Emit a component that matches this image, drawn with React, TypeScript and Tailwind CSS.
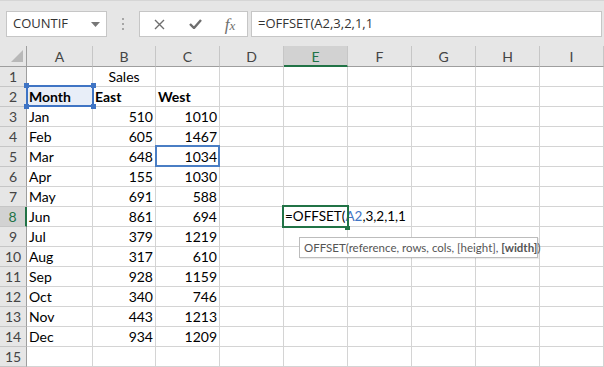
import React from "react";

const cols = ["A", "B", "C", "D", "E", "F", "G", "H", "I"];

const data: [string, number, number][] = [
  ["Jan", 510, 1010],
  ["Feb", 605, 1467],
  ["Mar", 648, 1034],
  ["Apr", 155, 1030],
  ["May", 691, 588],
  ["Jun", 861, 694],
  ["Jul", 379, 1219],
  ["Aug", 317, 610],
  ["Sep", 928, 1159],
  ["Oct", 340, 746],
  ["Nov", 443, 1213],
  ["Dec", 934, 1209],
];

function cellContent(row: number, col: number) {
  if (row === 1 && col === 1) return { text: "Sales", align: "center", bold: false };
  if (row === 2 && col === 0) return { text: "Month", align: "left", bold: true };
  if (row === 2 && col === 1) return { text: "East", align: "left", bold: true };
  if (row === 2 && col === 2) return { text: "West", align: "left", bold: true };
  const d = data[row - 3];
  if (d && col < 3) {
    if (col === 0) return { text: d[0], align: "left", bold: false };
    return { text: String(d[col]), align: "right", bold: false };
  }
  return null;
}

function FormulaBar() {
  return (
    <div className="flex h-[46px] items-start border-t border-[#d6d6d6] bg-[#e6e6e6] pl-[6px] pr-[2px] pt-[10px] font-['Open_Sans',sans-serif]">
      <div className="flex h-[26px] w-[101px] items-center justify-between border border-[#c6c6c6] bg-white pl-[6px] pr-[6px] text-[13px] text-[#333]">
        <span>COUNTIF</span>
        <svg width="9" height="5" viewBox="0 0 9 5">
          <path d="M0 0h9L4.5 5z" fill="#777" />
        </svg>
      </div>
      <div className="flex w-[32px] flex-col items-center gap-[3px] pt-[7px]">
        <span className="h-[2px] w-[2px] bg-[#a6a6a6]" />
        <span className="h-[2px] w-[2px] bg-[#a6a6a6]" />
        <span className="h-[2px] w-[2px] bg-[#a6a6a6]" />
      </div>
      <div className="flex h-[26px] w-[109px] items-center border border-[#c6c6c6] bg-white">
        <div className="flex w-[37px] justify-center pl-[2px]">
          <svg width="11" height="11" viewBox="0 0 11 11">
            <path d="M1 1l9 9M10 1l-9 9" stroke="#6e6e6e" strokeWidth="1.4" />
          </svg>
        </div>
        <div className="flex w-[36px] justify-center">
          <svg width="13" height="10" viewBox="0 0 13 10">
            <path d="M1 5l4 4 7-8" stroke="#6e6e6e" strokeWidth="2.4" fill="none" />
          </svg>
        </div>
        <div className="flex w-[34px] items-baseline justify-center font-['Liberation_Serif',serif] text-[17px] leading-none italic text-[#6e6e6e]">
          f<span className="text-[13px]">x</span>
        </div>
      </div>
      <div className="ml-[3px] flex h-[26px] flex-1 items-center border border-[#c6c6c6] bg-white pl-[6px] text-[13px] text-[#333]">
        =OFFSET(A2,3,2,1,1
      </div>
    </div>
  );
}

export default function App() {
  const rows = Array.from({ length: 15 }, (_, i) => i + 1);
  return (
    <div className="relative h-[367px] w-[604px] overflow-hidden bg-white font-['Lato',sans-serif] text-[14px] text-black">
      <FormulaBar />
      <div className="relative grid grid-cols-[27px_66px_63px_64px_64px_64px_64px_64px_64px_64px]">
        {/* column headers */}
        <div className="relative h-[21px] border-r border-b border-[#9e9e9e] bg-[#e6e6e6]">
          <svg className="absolute left-[11px] top-[4px]" width="12" height="12" viewBox="0 0 12 12">
            <path d="M12 0V12H0z" fill="#b8b8b8" />
          </svg>
        </div>
        {cols.map((c) => (
          <div
            key={c}
            className={
              c === "E"
                ? "flex h-[21px] items-center justify-center border-r border-b-2 border-r-[#c6c6c6] border-b-[#217346] bg-[#d2d2d2] pt-[1px] text-[#217346]"
                : "flex h-[21px] items-center justify-center border-r border-b border-r-[#c6c6c6] border-b-[#9e9e9e] bg-[#e6e6e6] text-[#444]"
            }
          >
            {c}
          </div>
        ))}
        {rows.map((r) => (
          <React.Fragment key={r}>
            <div
              className={
                r === 8
                  ? "flex h-[20px] items-center justify-center border-r-2 border-b border-r-[#217346] border-b-[#c6c6c6] bg-[#d2d2d2] text-[#217346]"
                  : "flex h-[20px] items-center justify-center border-r border-b border-r-[#9e9e9e] border-b-[#c6c6c6] bg-[#e6e6e6] text-[#444]"
              }
            >
              {r}
            </div>
            {cols.map((c, ci) => {
              const v = cellContent(r, ci);
              return (
                <div
                  key={c}
                  className={
                    "flex h-[20px] items-center overflow-visible whitespace-nowrap border-r border-b border-[#d4d4d4] px-[2px] " +
                    (v?.align === "right"
                      ? "justify-end"
                      : v?.align === "center"
                        ? "justify-center"
                        : "justify-start") +
                    (v?.bold ? " font-bold" : "") +
                    (r === 2 && ci === 0 ? " bg-[#e8eef8]" : "")
                  }
                >
                  {v?.text}
                </div>
              );
            })}
          </React.Fragment>
        ))}

        {/* reference highlight on A2 */}
        <div className="absolute left-[26px] top-[39px] h-[22px] w-[68px] border-2 border-[#3f74c4]">
          <span className="absolute -left-[4px] -top-[4px] h-[5px] w-[5px] bg-[#3f74c4]" />
          <span className="absolute -right-[4px] -top-[4px] h-[5px] w-[5px] bg-[#3f74c4]" />
          <span className="absolute -bottom-[4px] -left-[4px] h-[5px] w-[5px] bg-[#3f74c4]" />
          <span className="absolute -bottom-[4px] -right-[4px] h-[5px] w-[5px] bg-[#3f74c4]" />
        </div>

        {/* C5 outline */}
        <div className="absolute left-[155px] top-[99px] h-[22px] w-[65px] border-2 border-[#4a7ec4]" />

        {/* in-cell editor on E8 */}
        <div className="absolute left-[284px] top-[161px] flex h-[19px] w-[122px] items-center bg-white pl-[1px] text-[13.5px] whitespace-nowrap">
          =OFFSET(<span className="text-[#3f74c4]">A2</span>,3,2,1,1
          <span className="ml-[1px] h-[16px] w-[1px] bg-black" />
        </div>
        <div className="absolute left-[282px] top-[159px] h-[23px] w-[67px] border-2 border-[#217346]" />
        <div className="absolute left-[345px] top-[180px] h-[4px] w-[5px] bg-[#217346]" />

        {/* function tooltip */}
        <div className="absolute left-[299px] top-[191px] flex h-[21px] w-[239px] items-center border border-[#bcbcbc] bg-white pl-[4px] font-['Lato',sans-serif] text-[11.5px] whitespace-nowrap text-[#555] shadow-[1px_1px_1px_rgba(0,0,0,0.08)]">
          OFFSET(reference, rows, cols, [height],&nbsp;<span className="font-bold">[width]</span>)
        </div>
      </div>
    </div>
  );
}
